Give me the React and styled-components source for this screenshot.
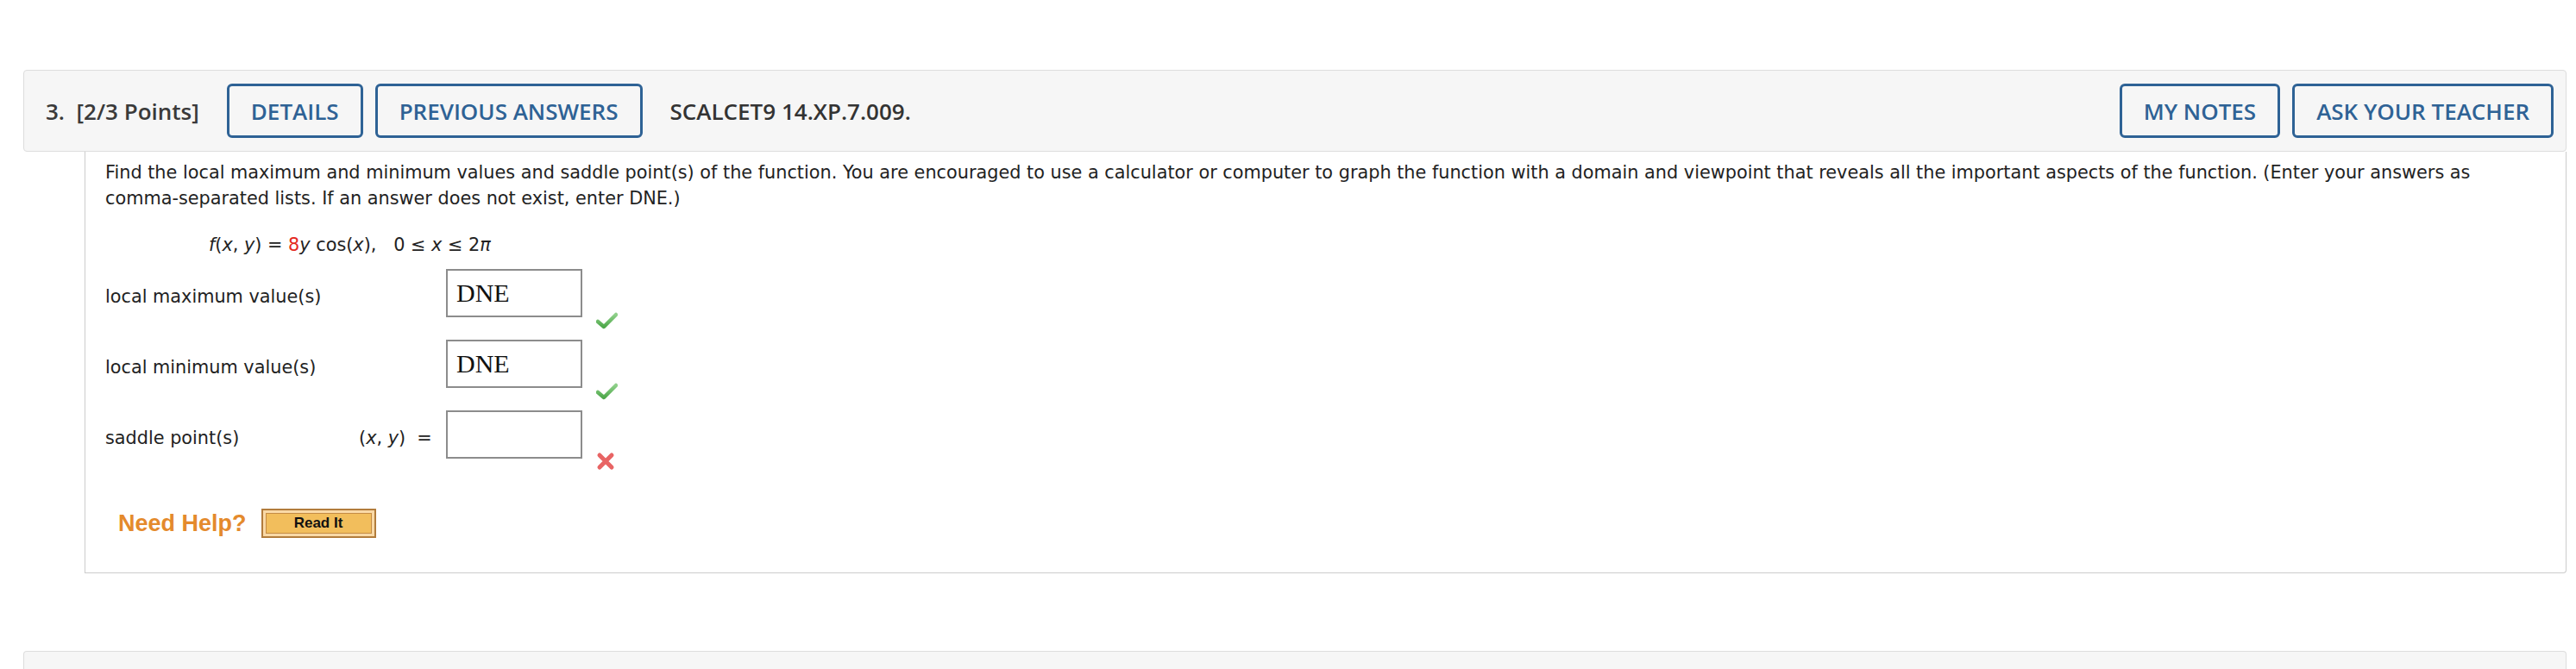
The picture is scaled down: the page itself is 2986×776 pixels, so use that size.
import React from "react";
import styled, { createGlobalStyle } from "styled-components";

const GlobalStyle = createGlobalStyle`
    body {
        margin: 0;
        background: #ffffff;
    }
`;

function CheckMark()
{
    return (
        <svg width="25" height="20" viewBox="0 0 25 20">
            <defs>
                <linearGradient id="okGrad" x1="0" y1="0" x2="0" y2="1">
                    <stop offset="0" stopColor="#8fd08a"/>
                    <stop offset="1" stopColor="#4ea84a"/>
                </linearGradient>
            </defs>
            <path d="M2 11 L9 17 L23 3" fill="none" stroke="url(#okGrad)" strokeWidth="4.5" strokeLinecap="round" strokeLinejoin="round"/>
        </svg>
    );
}

function CrossMark()
{
    return (
        <svg width="22" height="22" viewBox="0 0 22 22">
            <path d="M4 4 L18 18 M18 4 L4 18" fill="none" stroke="#e86464" strokeWidth="5" strokeLinecap="round"/>
        </svg>
    );
}

const rows = [
    { label: "local maximum value(s)", value: "DNE", correct: true },
    { label: "local minimum value(s)", value: "DNE", correct: true },
    { label: "saddle point(s)", prefix: true, value: "", correct: false },
];

function App()
{
    return (
        <Page>
            <GlobalStyle/>
            <Question>
                <Header>
                    <Number>3.&nbsp;&nbsp;[2/3 Points]</Number>
                    <HeaderButton>DETAILS</HeaderButton>
                    <HeaderButton>PREVIOUS ANSWERS</HeaderButton>
                    <Code>SCALCET9 14.XP.7.009.</Code>
                    <Spacer/>
                    <HeaderButton>MY NOTES</HeaderButton>
                    <HeaderButton>ASK YOUR TEACHER</HeaderButton>
                </Header>
                <Body>
                    <Prompt>
                        Find the local maximum and minimum values and saddle point(s) of the function. You are encouraged to use a calculator or computer to graph the function with a domain and viewpoint that reveals all the important aspects of the function. (Enter your answers as comma-separated lists. If an answer does not exist, enter DNE.)
                    </Prompt>
                    <Formula>
                        <i>f</i>(<i>x</i>, <i>y</i>) = <Red>8</Red><i>y</i> cos(<i>x</i>),&nbsp;&nbsp;&nbsp;0 ≤ <i>x</i> ≤ 2<i>π</i>
                    </Formula>
                    <Answers>
                        {rows.map((row, index) => (
                            <AnswerRow key={index}>
                                <Label>{row.label}</Label>
                                <Prefix>{row.prefix && <>(<i>x</i>, <i>y</i>)&nbsp;&nbsp;=</>}</Prefix>
                                <AnswerBox>{row.value}</AnswerBox>
                                <Mark>{row.correct ? <CheckMark/> : <CrossMark/>}</Mark>
                            </AnswerRow>
                        ))}
                    </Answers>
                    <HelpRow>
                        <HelpText>Need Help?</HelpText>
                        <ReadIt><ReadItInner>Read It</ReadItInner></ReadIt>
                    </HelpRow>
                </Body>
            </Question>
            <NextQuestion/>
        </Page>
    );
}

export default App;

const Page = styled.div`
    padding: 81px 11px 0 27px;
    font-family: "DejaVu Sans", Verdana, sans-serif;
    color: #222222;
`
const Question = styled.div`
    display: flex;
    flex-flow: column nowrap;
`
const Header = styled.div`
    display: flex;
    flex-flow: row nowrap;
    align-items: center;
    height: 95px;
    box-sizing: border-box;
    padding: 0 14px 0 25px;
    gap: 14px;
    background: #f6f6f6;
    border: 1.5px solid #dddddd;
    border-radius: 4px;
    font-family: "Open Sans", sans-serif;
    font-weight: 600;
    font-size: 26px;
`
const Number = styled.span`
    color: #3a3a3a;
    margin-right: 18px;
`
const Code = styled.span`
    color: #333333;
    margin-left: 18px;
`
const Spacer = styled.div`
    flex: 1 0 0;
`
const HeaderButton = styled.button`
    height: 63px;
    padding: 0 25px;
    background: transparent;
    border: 3px solid #2e6295;
    border-radius: 6px;
    color: #2e6295;
    font-family: "Open Sans", sans-serif;
    font-weight: 600;
    font-size: 26px;
`
const Body = styled.div`
    margin-left: 71px;
    padding: 9px 40px 40px 23px;
    border: 1.5px solid #cccccc;
    border-top: none;
    border-radius: 0 0 4px 0;
`
const Prompt = styled.p`
    margin: 0;
    font-size: 20.8px;
    line-height: 30px;
`
const Formula = styled.div`
    margin: 24px 0 0 120px;
    font-size: 20.8px;
    line-height: 30px;
`
const Red = styled.span`
    color: #e4291f;
`
const Answers = styled.div`
    display: flex;
    flex-flow: column nowrap;
    gap: 26px;
    margin-top: 13px;
`
const AnswerRow = styled.div`
    display: grid;
    grid-template-columns: 294px 101px 158px auto;
    align-items: center;
    height: 56px;
    font-size: 20.8px;
`
const Label = styled.span`
    padding-top: 8px;
`
const Prefix = styled.span`
    padding-top: 8px;
`
const AnswerBox = styled.div`
    box-sizing: border-box;
    height: 56px;
    padding: 8px 10px;
    border: 2px solid #8c8c8c;
    background: #ffffff;
    font-family: "Liberation Serif", "DejaVu Serif", serif;
    font-size: 30px;
    line-height: 36px;
    color: #111111;
`
const Mark = styled.span`
    align-self: end;
    margin: 0 0 -14px 16px;
    display: flex;
`
const HelpRow = styled.div`
    display: flex;
    flex-flow: row nowrap;
    align-items: center;
    gap: 17px;
    margin: 58px 0 0 15px;
`
const HelpText = styled.span`
    font-family: "Liberation Sans", Arial, sans-serif;
    font-weight: bold;
    font-size: 27px;
    color: #e48a2c;
`
const ReadIt = styled.div`
    box-sizing: border-box;
    width: 133px;
    height: 34px;
    padding: 3px;
    background: #f9d9a6;
    border: 2px solid #b27c3c;
`
const ReadItInner = styled.div`
    display: flex;
    align-items: center;
    justify-content: center;
    height: 100%;
    box-sizing: border-box;
    background: #f2be5c;
    border: 1px solid #c58c44;
    font-family: "Liberation Sans", Arial, sans-serif;
    font-weight: bold;
    font-size: 17px;
    color: #111111;
`
const NextQuestion = styled.div`
    margin-top: 90px;
    height: 40px;
    background: #f6f6f6;
    border: 1.5px solid #dddddd;
    border-bottom: none;
    border-radius: 4px 4px 0 0;
`
